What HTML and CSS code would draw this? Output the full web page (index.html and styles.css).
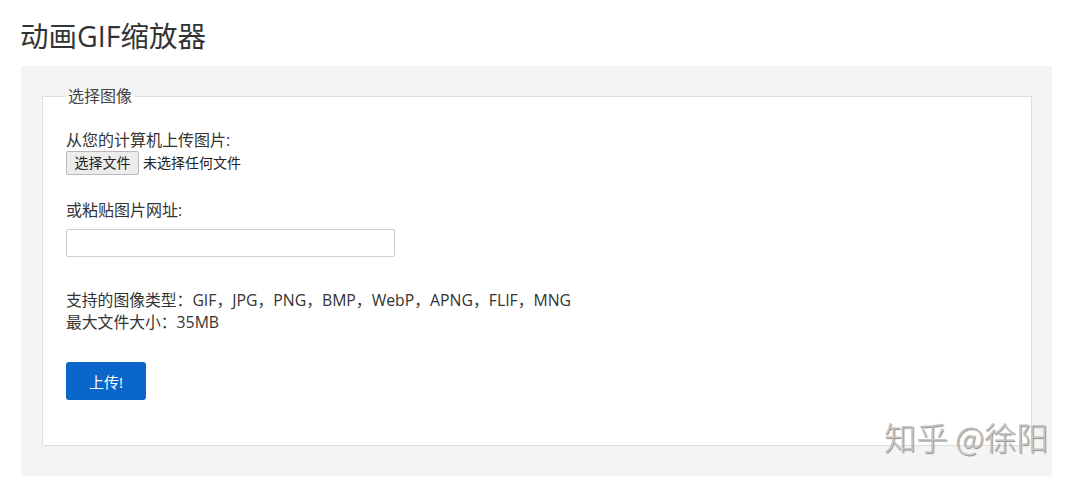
FILE: index.html
```html
<!DOCTYPE html>
<html lang="zh">
<head>
<meta charset="utf-8">
<title>动画GIF缩放器</title>
<link rel="stylesheet" href="styles.css">
</head>
<body>
<h1 class="title">动画GIF缩放器</h1>
<div class="panel">
  <fieldset class="box">
    <legend class="legend">选择图像</legend>
    <div class="label first">从您的计算机上传图片:</div>
    <div class="file-row">
      <span class="file-btn">选择文件</span>
      <span class="file-name">未选择任何文件</span>
    </div>
    <div class="label second">或粘贴图片网址:</div>
    <input class="url" type="text">
    <div class="info">
      <div>支持的图像类型：GIF，JPG，PNG，BMP，WebP，APNG，FLIF，MNG</div>
      <div>最大文件大小：35MB</div>
    </div>
    <button class="upload">上传!</button>
  </fieldset>
</div>
<div class="watermark">知乎 @徐阳</div>
</body>
</html>
```
FILE: styles.css
```css
html, body {
  margin: 0;
  padding: 0;
  background: #ffffff;
}
body {
  font-family: "Open Sans", "Noto Sans CJK SC", sans-serif;
  color: #333333;
  font-size: 16px;
  line-height: 20px;
  width: 1080px;
  height: 480px;
  position: relative;
  overflow: hidden;
}
.title {
  margin: 0;
  padding: 16px 0 10px 20px;
  font-size: 28.5px;
  line-height: 40px;
  font-weight: normal;
  color: #333;
  font-family: "Open Sans", "Noto Sans CJK SC", sans-serif;
}
.panel {
  margin: 0 28px 0 21px;
  background: #f4f4f5;
  padding: 20px 20px 30px 21px;
}
.box {
  margin: 0;
  border: 1px solid #dedede;
  background: #ffffff;
  padding: 0 23px 45px 23px;
  min-width: 0;
}
.legend {
  padding: 0 2px;
  font-size: 16px;
  line-height: 20px;
  color: #444;
}
.label {
  color: #333;
}
.label.first {
  margin-top: 24px;
}
.file-row {
  display: flex;
  align-items: center;
  gap: 4px;
  margin-top: 1px;
  height: 24px;
}
.file-btn {
  box-sizing: border-box;
  height: 24px;
  width: 73px;
  display: flex;
  align-items: center;
  justify-content: center;
  background: #ececec;
  border: 1px solid #b8b8b8;
  border-radius: 2px;
  font-size: 14px;
  color: #222;
}
.file-name {
  font-size: 14px;
  color: #222;
}
.label.second {
  margin-top: 25px;
}
.url {
  display: block;
  box-sizing: border-box;
  margin: 9px 0 0 0;
  width: 329px;
  height: 28px;
  border: 1px solid #cfcfcf;
  border-radius: 2px;
  background: #fff;
  padding: 0 6px;
}
.info {
  margin-top: 32px;
  line-height: 22px;
  font-size: 15.8px;
}
.upload {
  display: block;
  margin-top: 29px;
  width: 80px;
  height: 38px;
  border: none;
  border-radius: 3px;
  background: #0b66c9;
  color: #ffffff;
  font-family: "Open Sans", "Noto Sans CJK SC", sans-serif;
  font-size: 15px;
  padding: 0;
}
.watermark {
  position: absolute;
  left: 884px;
  top: 416px;
  font-size: 32px;
  line-height: 40px;
  color: #c4c4c4;
  text-shadow: 1px 1px 1px #8a8a8a;
  font-family: "Noto Sans CJK SC", sans-serif;
  font-weight: 300;
}
```
